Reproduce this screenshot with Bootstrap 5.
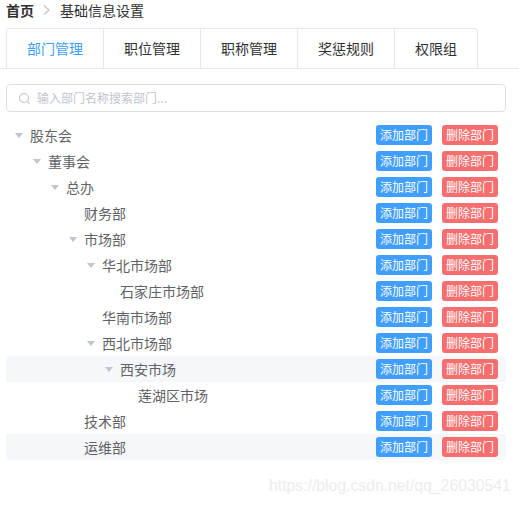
<!DOCTYPE html>
<html lang="zh">
<head>
<meta charset="utf-8">
<link href="https://cdn.jsdelivr.net/npm/bootstrap@5.3.0/dist/css/bootstrap.min.css" rel="stylesheet">
<style>
html,body{height:505px;overflow:hidden}
body{font-family:"Noto Sans CJK SC",sans-serif;background:#fff;color:#606266;font-size:14px;position:relative}
.pg{padding:0 0 0 6px;width:519px}
.crumb{height:20px;margin-bottom:8px;font-size:14px;color:#303133;gap:8px}
.crumb b{font-weight:700;color:#303133}
.crumb svg{display:block}
.tabs-wrap{margin-left:-6px;padding-left:6px;border-bottom:1px solid #e4e7ed;height:41px}
.tb{width:97px;height:40px;border:1px solid #e4e7ed;border-left:0;border-bottom:0;font-size:14px;color:#303133;background:#fff}
.tb:first-child{border-left:1px solid #e4e7ed;border-top-left-radius:4px;width:98px;color:#409eff}
.tb:last-child{border-top-right-radius:4px;width:83px}
.srch{width:500px;height:28px;margin-top:15px;border:1px solid #dcdfe6;border-radius:4px;padding-left:11px;gap:6px;font-size:12px;color:#c0c4cc}
.tree{width:500px;margin-top:10px}
.rw{height:26px;padding-right:8px}
.rw.hl{background:#f5f7fa}
.car{width:24px;height:26px;flex:none}
.open{padding-left:1px}
.open::after{content:"";border-left:4px solid transparent;border-right:4px solid transparent;border-top:5px solid #c0c4cc}
.b1,.b2{width:56px;height:20px;padding:0;border:0;border-radius:3px;font-size:12px;line-height:20px;color:#fff}
.b1{background:#409eff;margin-right:10px}
.b2{background:#f76e6e}
.l0{padding-left:0}.l1{padding-left:18px}.l2{padding-left:36px}.l3{padding-left:54px}.l4{padding-left:72px}.l5{padding-left:90px}.l6{padding-left:108px}
.wm{position:absolute;left:269px;top:477px;font:15.75px "Liberation Sans",sans-serif;color:#ececec;white-space:nowrap}
</style>
</head>
<body>
<div class="pg">
  <div class="crumb d-flex align-items-center">
    <b>首页</b>
    <svg width="10" height="12" viewBox="0 0 10 12"><path d="M2 1.5l5 4.5-5 4.5" fill="none" stroke="#c0c4cc" stroke-width="1.2"/></svg>
    <span>基础信息设置</span>
  </div>
  <div class="tabs-wrap d-flex">
    <div class="tb d-flex align-items-center justify-content-center">部门管理</div>
    <div class="tb d-flex align-items-center justify-content-center">职位管理</div>
    <div class="tb d-flex align-items-center justify-content-center">职称管理</div>
    <div class="tb d-flex align-items-center justify-content-center">奖惩规则</div>
    <div class="tb d-flex align-items-center justify-content-center">权限组</div>
  </div>
  <div class="srch d-flex align-items-center">
    <svg width="13" height="13" viewBox="0 0 13 13"><circle cx="6" cy="6" r="4.5" fill="none" stroke="#c0c4cc" stroke-width="1.1"/><path d="M9.3 9.3l2.4 2.4" stroke="#c0c4cc" stroke-width="1.1"/></svg>
    <span>输入部门名称搜索部门...</span>
  </div>
  <div class="tree">
    <div class="rw d-flex align-items-center justify-content-between"><div class="d-flex align-items-center l0"><span class="car open d-flex align-items-center justify-content-center"></span>股东会</div><div class="d-flex"><button class="b1">添加部门</button><button class="b2">删除部门</button></div></div>
    <div class="rw d-flex align-items-center justify-content-between"><div class="d-flex align-items-center l1"><span class="car open d-flex align-items-center justify-content-center"></span>董事会</div><div class="d-flex"><button class="b1">添加部门</button><button class="b2">删除部门</button></div></div>
    <div class="rw d-flex align-items-center justify-content-between"><div class="d-flex align-items-center l2"><span class="car open d-flex align-items-center justify-content-center"></span>总办</div><div class="d-flex"><button class="b1">添加部门</button><button class="b2">删除部门</button></div></div>
    <div class="rw d-flex align-items-center justify-content-between"><div class="d-flex align-items-center l3"><span class="car"></span>财务部</div><div class="d-flex"><button class="b1">添加部门</button><button class="b2">删除部门</button></div></div>
    <div class="rw d-flex align-items-center justify-content-between"><div class="d-flex align-items-center l3"><span class="car open d-flex align-items-center justify-content-center"></span>市场部</div><div class="d-flex"><button class="b1">添加部门</button><button class="b2">删除部门</button></div></div>
    <div class="rw d-flex align-items-center justify-content-between"><div class="d-flex align-items-center l4"><span class="car open d-flex align-items-center justify-content-center"></span>华北市场部</div><div class="d-flex"><button class="b1">添加部门</button><button class="b2">删除部门</button></div></div>
    <div class="rw d-flex align-items-center justify-content-between"><div class="d-flex align-items-center l5"><span class="car"></span>石家庄市场部</div><div class="d-flex"><button class="b1">添加部门</button><button class="b2">删除部门</button></div></div>
    <div class="rw d-flex align-items-center justify-content-between"><div class="d-flex align-items-center l4"><span class="car"></span>华南市场部</div><div class="d-flex"><button class="b1">添加部门</button><button class="b2">删除部门</button></div></div>
    <div class="rw d-flex align-items-center justify-content-between"><div class="d-flex align-items-center l4"><span class="car open d-flex align-items-center justify-content-center"></span>西北市场部</div><div class="d-flex"><button class="b1">添加部门</button><button class="b2">删除部门</button></div></div>
    <div class="rw hl d-flex align-items-center justify-content-between"><div class="d-flex align-items-center l5"><span class="car open d-flex align-items-center justify-content-center"></span>西安市场</div><div class="d-flex"><button class="b1">添加部门</button><button class="b2">删除部门</button></div></div>
    <div class="rw d-flex align-items-center justify-content-between"><div class="d-flex align-items-center l6"><span class="car"></span>莲湖区市场</div><div class="d-flex"><button class="b1">添加部门</button><button class="b2">删除部门</button></div></div>
    <div class="rw d-flex align-items-center justify-content-between"><div class="d-flex align-items-center l3"><span class="car"></span>技术部</div><div class="d-flex"><button class="b1">添加部门</button><button class="b2">删除部门</button></div></div>
    <div class="rw hl d-flex align-items-center justify-content-between"><div class="d-flex align-items-center l3"><span class="car"></span>运维部</div><div class="d-flex"><button class="b1">添加部门</button><button class="b2">删除部门</button></div></div>
  </div>
</div>
<div class="wm">https://blog.csdn.net/qq_26030541</div>
<script src="https://cdn.jsdelivr.net/npm/bootstrap@5.3.0/dist/js/bootstrap.bundle.min.js"></script>
</body>
</html>
